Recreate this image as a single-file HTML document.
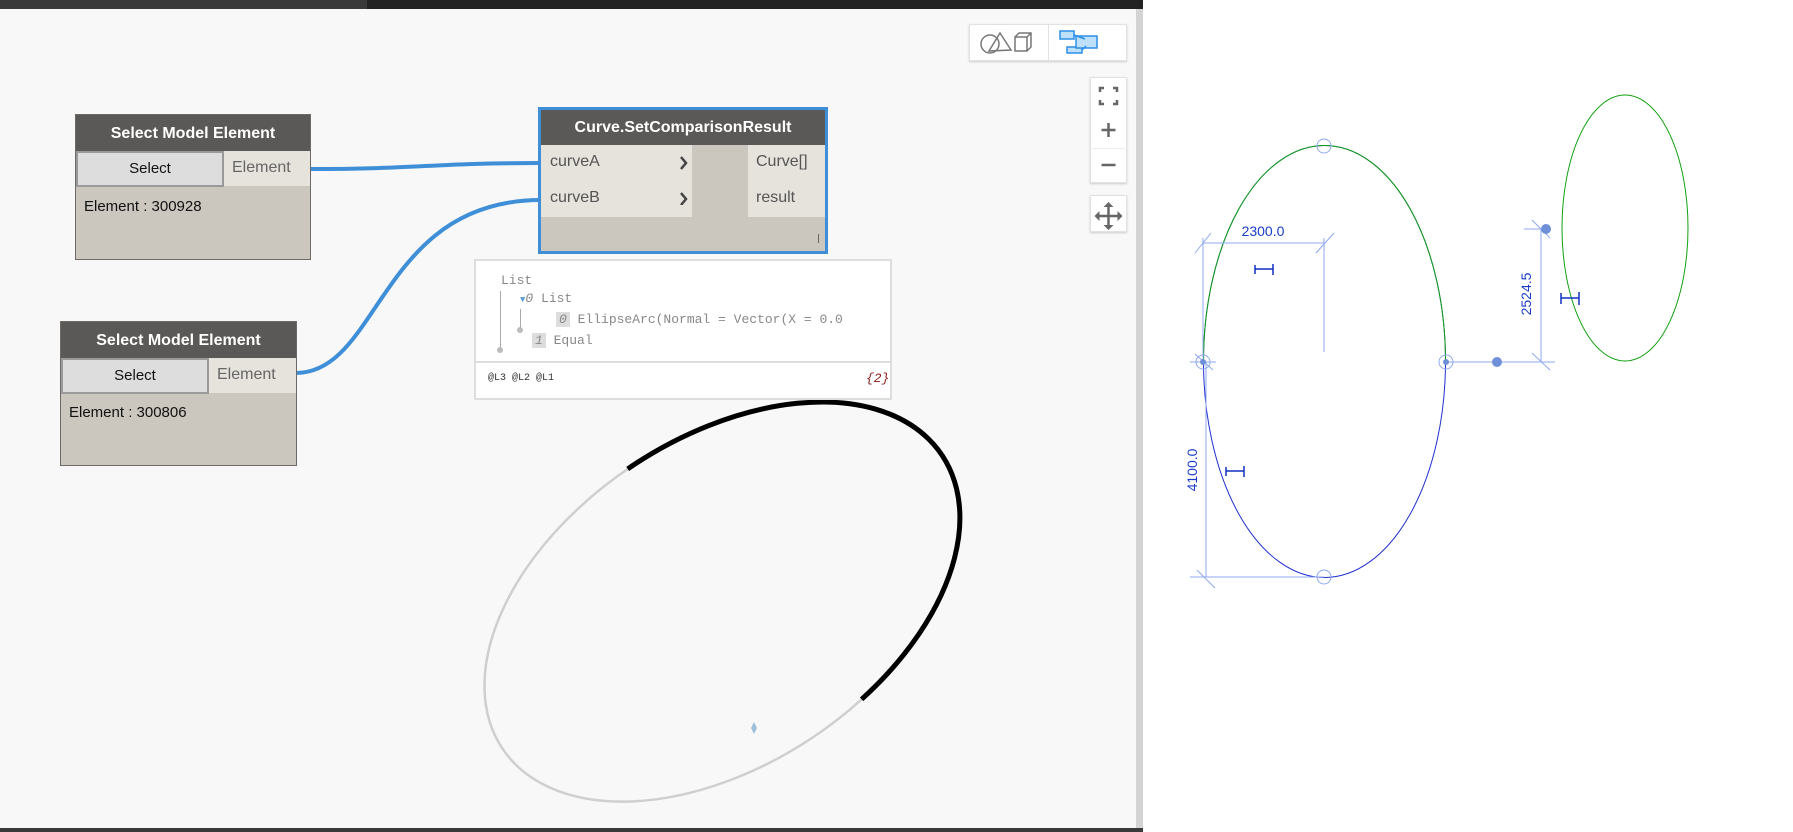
<!DOCTYPE html>
<html><head><meta charset="utf-8"><style>
*{margin:0;padding:0;box-sizing:border-box}
html,body{width:1793px;height:832px;overflow:hidden}
body{background:#fff;position:relative;font-family:"Liberation Sans",sans-serif}
.abs{position:absolute}
.canvas{left:0;top:0;width:1143px;height:832px;background:#f8f8f8;border-right:7px solid #d4d4d4}
.node{position:absolute;background:#cbc6be;border:1px solid #6e6b67}
.hdr{height:37px;background:#5b5957;color:#fff;font-weight:bold;font-size:16px;text-align:center;line-height:37px}
.sel{position:absolute;background:#dddddd;border:2px solid #9a9a9a;font-size:15px;text-align:center;color:#111}
.port{position:absolute;background:#e6e2dc;color:#666;font-size:16px;line-height:34px;padding-left:8px}
.info{position:absolute;font-size:15px;color:#111}
.mono{font-family:"Liberation Mono",monospace;font-size:13px;color:#888;position:absolute;white-space:nowrap}
</style></head><body>
<div class="abs canvas"></div>
<div class="abs" style="left:0;top:0;width:367px;height:9px;background:#3a3a3a"></div>
<div class="abs" style="left:367px;top:0;width:776px;height:9px;background:#232323"></div>
<div class="abs" style="left:0;top:828px;width:1143px;height:4px;background:#3a3a3a"></div>

<svg class="abs" style="left:0;top:0" width="1793" height="832">
 <path d="M310 169 C420 169 430 163 541 163" stroke="#3e8fd8" stroke-width="4" fill="none"/>
 <path d="M296 373 C380 373 380 200 541 200" stroke="#3e8fd8" stroke-width="4" fill="none"/>
 <g transform="rotate(-33.7 722 602)">
  <ellipse cx="722" cy="602" rx="264" ry="163" fill="none" stroke="#cfcfcf" stroke-width="2.5"/>
 </g>
 <path d="M627.7 468.9 A264 163 -33.7 0 1 861.6 699.3" stroke="#000" stroke-width="5" fill="none"/>
 <path d="M754 722 l3 6 -3 6 -3 -6z" fill="#9cc0dc"/>
 <ellipse cx="1324.5" cy="361.5" rx="121" ry="216" fill="none" stroke="#2030d0" stroke-width="1"/>
 <path d="M1203.5 361.5 A121 216 0 0 1 1445.5 361.5" fill="none" stroke="#10a010" stroke-width="1"/>
 <ellipse cx="1625" cy="228" rx="63" ry="133" fill="none" stroke="#10a010" stroke-width="1"/>
 <g stroke="#8fa8f0" stroke-width="1" fill="none">
  <line x1="1203" y1="243" x2="1324" y2="243"/><line x1="1203" y1="238" x2="1203" y2="362"/>
  <line x1="1324" y1="238" x2="1324" y2="352"/><line x1="1195" y1="253" x2="1211" y2="233"/><line x1="1316" y1="253" x2="1334" y2="233"/>
  <line x1="1206" y1="362" x2="1206" y2="577"/><line x1="1190" y1="577" x2="1324" y2="577"/><line x1="1197" y1="570" x2="1215" y2="588"/>
  <line x1="1190" y1="362" x2="1216" y2="362"/><line x1="1195" y1="354" x2="1213" y2="370"/>
  <line x1="1446" y1="362" x2="1555" y2="362"/><line x1="1541" y1="229" x2="1541" y2="362"/>
  <line x1="1524" y1="229" x2="1546" y2="229"/><line x1="1532" y1="220" x2="1550" y2="238"/><line x1="1532" y1="353" x2="1550" y2="370"/>
  <circle cx="1324" cy="146" r="7"/><circle cx="1324" cy="577" r="7"/><circle cx="1203" cy="362" r="7"/><circle cx="1446" cy="362" r="7"/>
 </g>
 <g fill="#6f8fd8"><circle cx="1203" cy="362" r="3"/><circle cx="1446" cy="362" r="3"/><circle cx="1497" cy="362" r="5"/><circle cx="1546" cy="229" r="5"/></g>
 <g stroke="#1030c0" stroke-width="1.5" fill="none">
  <path d="M1255 269h18M1255 265v9M1273 264v11"/>
  <path d="M1226 471h18M1226 467v9M1244 466v11"/>
  <path d="M1561 298h18M1561 293v11M1579 292v13"/>
 </g>
 <g fill="#1a3cc8" font-family="Liberation Sans,sans-serif" font-size="14">
  <text x="1263" y="236" text-anchor="middle">2300.0</text>
  <text transform="translate(1197 470) rotate(-90)" text-anchor="middle">4100.0</text>
  <text transform="translate(1531 294) rotate(-90)" text-anchor="middle">2524.5</text>
 </g>
</svg>

<div class="node" style="left:75px;top:114px;width:236px;height:146px">
 <div class="hdr">Select Model Element</div>
 <div class="sel" style="left:0;top:36px;width:148px;height:36px;line-height:32px">Select</div>
 <div class="port" style="left:148px;top:36px;width:86px;height:35px">Element</div>
 <div class="info" style="left:8px;top:83px">Element : 300928</div>
</div>
<div class="node" style="left:60px;top:321px;width:237px;height:145px">
 <div class="hdr">Select Model Element</div>
 <div class="sel" style="left:0;top:36px;width:148px;height:36px;line-height:32px">Select</div>
 <div class="port" style="left:148px;top:36px;width:87px;height:35px">Element</div>
 <div class="info" style="left:8px;top:82px">Element : 300806</div>
</div>
<div class="node" style="left:538px;top:107px;width:290px;height:147px;border:3px solid #3e8fd8">
 <div class="hdr" style="height:35px;line-height:35px">Curve.SetComparisonResult</div>
 <div class="port" style="left:0;top:35px;width:151px;height:36px;background:#e6e2dc;color:#555;padding-left:9px">curveA</div>
 <div class="port" style="left:0;top:71px;width:151px;height:36px;background:#e6e2dc;color:#555;padding-left:9px">curveB</div>
 <svg class="abs" style="left:138px;top:45px" width="10" height="50"><g stroke="#444" stroke-width="2.5" fill="none"><path d="M2 2l5 6-5 6"/><path d="M2 38l5 6-5 6"/></g></svg>
 <div class="port" style="left:207px;top:35px;width:77px;height:36px;color:#555;padding-left:8px">Curve[]</div>
 <div class="port" style="left:207px;top:71px;width:77px;height:36px;color:#555;padding-left:8px">result</div>
 <div class="abs" style="left:277px;top:124px;width:1px;height:9px;background:#666"></div>
</div>
<div class="abs" style="left:474px;top:259px;width:418px;height:141px;background:#fff;border:2px solid #ddd;overflow:hidden">
 <div class="abs" style="left:0;top:100px;width:418px;height:2px;background:#ddd"></div>
 <div class="mono" style="left:25px;top:12px">List</div>
 <div class="abs" style="left:24px;top:30px;width:1px;height:58px;background:#aaa"></div>
 <div class="abs" style="left:21px;top:86px;width:6px;height:6px;border-radius:3px;background:#bbb"></div>
 <div class="abs" style="left:44px;top:48px;width:1px;height:20px;background:#aaa"></div>
 <div class="abs" style="left:41px;top:66px;width:6px;height:6px;border-radius:3px;background:#bbb"></div>
 <div class="mono" style="left:44px;top:30px"><span style="color:#5b9bd5;font-size:9px">▼</span><i>0</i> List</div>
 <div class="mono" style="left:80px;top:51px"><span style="background:#ddd;padding:0 3px"><i>0</i></span> EllipseArc(Normal = Vector(X = 0.0</div>
 <div class="mono" style="left:56px;top:72px"><span style="background:#ddd;padding:0 3px"><i>1</i></span> Equal</div>
 <div class="mono" style="left:12px;top:112px;font-size:10px;color:#333">@L3 @L2 @L1</div>
 <div class="mono" style="left:390px;top:110px;color:#8b1a1a;font-style:italic">{2}</div>
</div>
<div class="abs" style="left:969px;top:24px;width:158px;height:37px;background:#fff;border:1px solid #e2e2e2;box-shadow:0 1px 2px #ccc"></div>
<div class="abs" style="left:1048px;top:24px;width:1px;height:37px;background:#e2e2e2"></div>
<svg class="abs" style="left:969px;top:24px" width="158" height="37">
 <g stroke="#777" stroke-width="1.5" fill="none">
  <circle cx="21" cy="20" r="9"/><path d="M20 27 L31 9 L42 26 Z"/>
  <path d="M46 13h12v14h-12z M46 13l4 -4h12v14l-4 4 M58 13l4-4"/>
 </g>
 <g stroke="#2a8fe8" fill="#bfe0fb" stroke-width="1.5">
  <rect x="91" y="7" width="14" height="8"/><rect x="98" y="23" width="15" height="6"/><rect x="107" y="12" width="21" height="12"/>
  <path d="M105 11 L116 15 M113 26 L117 22" fill="none"/>
 </g>
</svg>
<div class="abs" style="left:1090px;top:77px;width:37px;height:106px;background:#fff;border:1px solid #e2e2e2;box-shadow:0 1px 2px #ccc"></div>
<div class="abs" style="left:1090px;top:148px;width:37px;height:1px;background:#eee"></div>
<div class="abs" style="left:1090px;top:195px;width:37px;height:37px;background:#fff;border:1px solid #e2e2e2;box-shadow:0 1px 2px #ccc"></div>
<svg class="abs" style="left:1090px;top:77px" width="37" height="155">
 <g stroke="#666" stroke-width="2.5" fill="none">
  <path d="M10 15v-4h4 M23 11h4v4 M27 23v4h-4 M14 27h-4v-4"/>
  <path d="M18.5 46v14 M11.5 53h14"/>
  <path d="M11.5 88h14"/>
  <path d="M18.5 128v22 M7.5 139h22"/>
 </g>
 <g fill="#666"><path d="M18.5 125l-5 5h10z M18.5 153l-5-5h10z M4.5 139l5-5v10z M32.5 139l-5-5v10z"/></g>
</svg>
</body></html>
